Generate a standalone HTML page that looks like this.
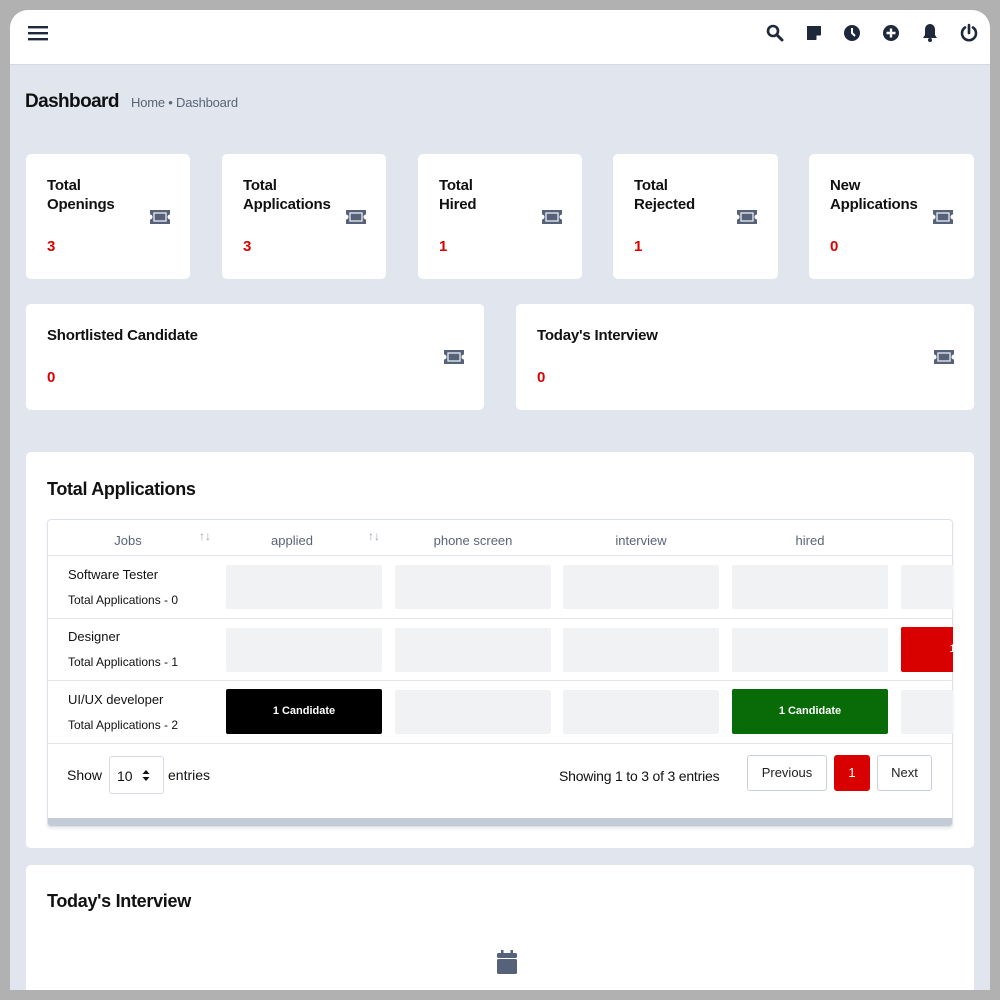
<!DOCTYPE html>
<html><head><meta charset="utf-8"><style>
*{box-sizing:border-box;margin:0;padding:0}
body{width:1000px;height:1000px;background:#b0b1b0;font-family:"Liberation Sans",sans-serif;overflow:hidden;position:relative;color:#111}
.screen{position:absolute;left:10px;top:10px;width:980px;height:980px;background:#e1e6ee;border-radius:18px 18px 0 0;overflow:hidden}
.hdr{position:absolute;left:0;top:0;width:980px;height:55px;background:#fff;border-bottom:1px solid #d5dae2}
.abs{position:absolute}
.card{position:absolute;background:#fff;border-radius:5px}
.ct{position:absolute;font-size:15px;line-height:19px;color:#111;font-weight:bold;letter-spacing:-0.2px}
.num{position:absolute;color:#d90000;font-weight:bold;font-size:15px}
.tk{position:absolute;width:22px;height:14px}
.cell{position:absolute;width:156px;height:44px;background:#f1f2f4;border-radius:2px}
.th{position:absolute;top:523px;font-size:13px;color:#5a6478;text-align:center}
.job{position:absolute;left:58px;font-size:13px}
.sub{position:absolute;left:58px;font-size:12px}
.hl{position:absolute;left:37px;width:906px;height:1px;background:#e2e6ec}
.btn{position:absolute;border:1px solid #c9cfd8;border-radius:3px;background:#fff;font-size:13px;text-align:center;line-height:34px;color:#222}
.h2{position:absolute;font-size:18px;font-weight:bold;letter-spacing:-0.3px}
</style></head><body>
<div class="screen">
<div class="hdr">
 <svg class="abs" style="left:18px;top:16px" width="20" height="15"><rect y="0" width="20" height="2.4" fill="#1e293b"/><rect y="6" width="20" height="2.4" fill="#1e293b"/><rect y="12" width="20" height="2.4" fill="#1e293b"/></svg>
 <svg class="abs" style="left:756px;top:14px" width="18" height="18" viewBox="0 0 18 18"><circle cx="7" cy="7" r="5" fill="none" stroke="#1e293b" stroke-width="2.6"/><path d="M11 11l5 5" stroke="#1e293b" stroke-width="3" stroke-linecap="round"/></svg>
 <svg class="abs" style="left:796px;top:15px" width="16" height="16" viewBox="0 0 16 16"><path d="M1 1h14v9l-5 5H1z" fill="#1e293b"/><path d="M10.5 15v-4.5h4.5z" fill="#fff"/></svg>
 <svg class="abs" style="left:833px;top:14px" width="18" height="18" viewBox="0 0 18 18"><circle cx="9" cy="9" r="8" fill="#1e293b"/><path d="M9 4v5l3 3" stroke="#fff" stroke-width="2" fill="none"/></svg>
 <svg class="abs" style="left:872px;top:14px" width="18" height="18" viewBox="0 0 18 18"><circle cx="9" cy="9" r="8" fill="#1e293b"/><path d="M9 4.5v9M4.5 9h9" stroke="#fff" stroke-width="2.4"/></svg>
 <svg class="abs" style="left:912px;top:13px" width="16" height="19" viewBox="0 0 16 19"><path d="M8 1c-3 0-5 2.5-5 5.5V12L1 15h14l-2-3V6.5C13 3.5 11 1 8 1z" fill="#1e293b"/><circle cx="8" cy="17" r="2" fill="#1e293b"/></svg>
 <svg class="abs" style="left:950px;top:13px" width="18" height="19" viewBox="0 0 18 19"><path d="M5 4.5A7 7 0 1 0 13 4.5" fill="none" stroke="#1e293b" stroke-width="2.6" stroke-linecap="round"/><path d="M9 2v8" stroke="#1e293b" stroke-width="2.6" stroke-linecap="round"/></svg>
</div>
<div class="abs" style="left:15px;top:81px;font-size:19px;font-weight:bold;letter-spacing:-0.6px">Dashboard</div>
<div class="abs" style="left:121px;top:85px;font-size:13px;color:#5a6478;letter-spacing:-0.2px">Home • Dashboard</div>

<svg width="0" height="0" style="position:absolute"><defs><symbol id="tk" viewBox="0 0 22 14"><path d="M1 0h20v4.5a2.5 2.5 0 0 0 0 5V14H1V9.5a2.5 2.5 0 0 0 0-5z" fill="#56627a"/><rect x="5" y="3" width="12" height="8" fill="none" stroke="#e9edf2" stroke-width="1.3"/></symbol></defs></svg>

<div class="card" style="left:16px;top:144px;width:164px;height:125px"><div class="ct" style="left:21px;top:22px">Total<br>Openings</div><svg class="tk" style="left:123px;top:56px"><use href="#tk"/></svg><div class="num" style="left:21px;top:84px">3</div></div>
<div class="card" style="left:212px;top:144px;width:164px;height:125px"><div class="ct" style="left:21px;top:22px">Total<br>Applications</div><svg class="tk" style="left:123px;top:56px"><use href="#tk"/></svg><div class="num" style="left:21px;top:84px">3</div></div>
<div class="card" style="left:408px;top:144px;width:164px;height:125px"><div class="ct" style="left:21px;top:22px">Total<br>Hired</div><svg class="tk" style="left:123px;top:56px"><use href="#tk"/></svg><div class="num" style="left:21px;top:84px">1</div></div>
<div class="card" style="left:603px;top:144px;width:165px;height:125px"><div class="ct" style="left:21px;top:22px">Total<br>Rejected</div><svg class="tk" style="left:123px;top:56px"><use href="#tk"/></svg><div class="num" style="left:21px;top:84px">1</div></div>
<div class="card" style="left:799px;top:144px;width:165px;height:125px"><div class="ct" style="left:21px;top:22px">New<br>Applications</div><svg class="tk" style="left:123px;top:56px"><use href="#tk"/></svg><div class="num" style="left:21px;top:84px">0</div></div>

<div class="card" style="left:16px;top:294px;width:458px;height:106px"><div class="ct" style="left:21px;top:22px">Shortlisted Candidate</div><svg class="tk" style="left:417px;top:46px"><use href="#tk"/></svg><div class="num" style="left:21px;top:65px">0</div></div>
<div class="card" style="left:506px;top:294px;width:458px;height:106px"><div class="ct" style="left:21px;top:22px">Today's Interview</div><svg class="tk" style="left:417px;top:46px"><use href="#tk"/></svg><div class="num" style="left:21px;top:65px">0</div></div>

<div class="card" style="left:16px;top:442px;width:948px;height:396px"></div>
<div class="h2" style="left:37px;top:469px">Total Applications</div>
<div class="abs" style="left:37px;top:509px;width:906px;height:308px;background:#fff;border:1px solid #dde2ea;border-radius:4px;overflow:hidden;box-shadow:0 2px 3px rgba(0,0,0,.08)">
 <div class="abs" style="left:0;bottom:0;width:906px;height:8px;background:#c3ccd6"></div>
</div>
<div class="th" style="left:88px;width:60px">Jobs</div><div class="abs" style="left:189px;top:519px;font-size:12px;color:#9aa3b0">↑↓</div>
<div class="th" style="left:242px;width:80px">applied</div><div class="abs" style="left:358px;top:519px;font-size:12px;color:#9aa3b0">↑↓</div>
<div class="th" style="left:403px;width:120px">phone screen</div>
<div class="th" style="left:581px;width:100px">interview</div>
<div class="th" style="left:760px;width:80px">hired</div>
<div class="hl" style="top:545px"></div>
<div class="hl" style="top:608px"></div>
<div class="hl" style="top:670px"></div>
<div class="hl" style="top:733px"></div>

<div class="job" style="top:557px">Software Tester</div><div class="sub" style="top:583px">Total Applications - 0</div>
<div class="job" style="top:619px">Designer</div><div class="sub" style="top:645px">Total Applications - 1</div>
<div class="job" style="top:682px">UI/UX developer</div><div class="sub" style="top:708px">Total Applications - 2</div>

<div class="abs" style="left:216px;top:555px;width:727px;height:180px;overflow:hidden">
 <div class="cell" style="left:0;top:0"></div><div class="cell" style="left:169px;top:0"></div><div class="cell" style="left:337px;top:0"></div><div class="cell" style="left:506px;top:0"></div><div class="cell" style="left:675px;top:0"></div>
 <div class="cell" style="left:0;top:63px"></div><div class="cell" style="left:169px;top:63px"></div><div class="cell" style="left:337px;top:63px"></div><div class="cell" style="left:506px;top:63px"></div><div class="cell" style="left:675px;top:62px;height:45px;background:#d90000;color:#fff;font-size:11px;text-align:center;line-height:45px">1 Candidate</div>
 <div class="cell" style="left:0;top:124px;height:45px;background:#000;color:#fff;font-size:11px;text-align:center;line-height:45px;font-weight:bold">1 Candidate</div><div class="cell" style="left:169px;top:125px"></div><div class="cell" style="left:337px;top:125px"></div><div class="cell" style="left:506px;top:124px;height:45px;background:#086b08;color:#fff;font-size:11px;text-align:center;line-height:45px;font-weight:bold">1 Candidate</div><div class="cell" style="left:675px;top:125px"></div>
</div>

<div class="abs" style="left:57px;top:757px;font-size:14px">Show</div>
<div class="abs" style="left:99px;top:746px;width:55px;height:38px;border:1px solid #d5dae2;border-radius:3px;font-size:14px;padding:11px 0 0 7px">10</div>
<svg class="abs" style="left:132px;top:760px" width="8" height="11" viewBox="0 0 8 11"><path d="M4 0l3.5 4h-7zM4 11l3.5-4h-7z" fill="#111"/></svg>
<div class="abs" style="left:158px;top:757px;font-size:14px">entries</div>
<div class="abs" style="left:549px;top:758px;font-size:14px;letter-spacing:-0.2px">Showing 1 to 3 of 3 entries</div>
<div class="btn" style="left:737px;top:745px;width:80px;height:36px">Previous</div>
<div class="btn" style="left:824px;top:745px;width:36px;height:36px;background:#d90000;border-color:#d90000;color:#fff">1</div>
<div class="btn" style="left:867px;top:745px;width:55px;height:36px">Next</div>

<div class="card" style="left:16px;top:855px;width:948px;height:140px"></div>
<div class="h2" style="left:37px;top:881px">Today's Interview</div>
<svg class="abs" style="left:487px;top:940px" width="20" height="24" viewBox="0 0 20 24"><rect x="4" y="0" width="2.5" height="5" fill="#56627a"/><rect x="13.5" y="0" width="2.5" height="5" fill="#56627a"/><rect x="0" y="3" width="20" height="5" rx="1.5" fill="#56627a"/><rect x="0" y="9" width="20" height="15" rx="1.5" fill="#56627a"/></svg>
</div>
</body></html>
